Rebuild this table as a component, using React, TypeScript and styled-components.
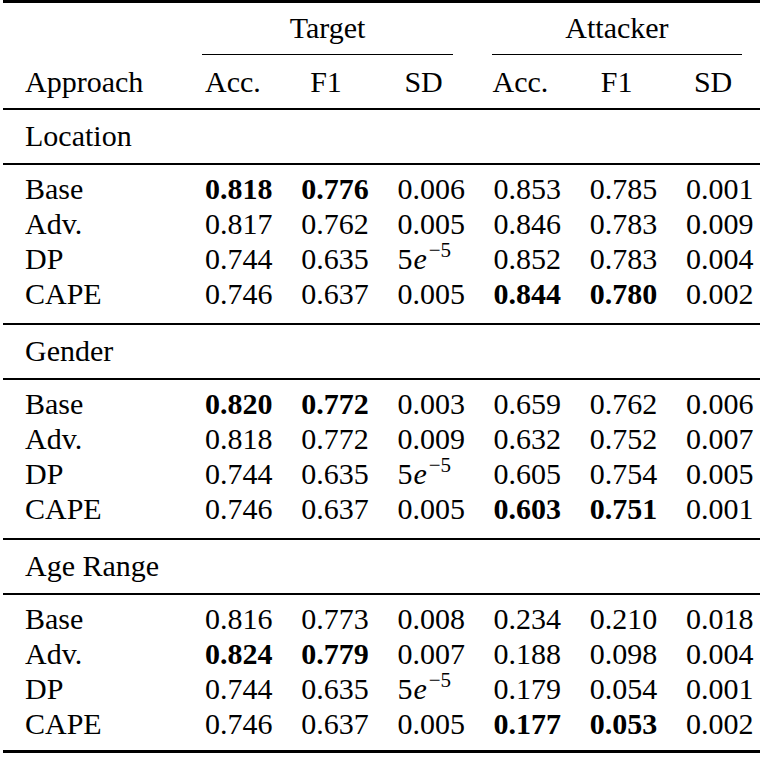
import React from 'react'
import styled, { createGlobalStyle } from 'styled-components'

const COLS = '199px repeat(5, 96.2px) 77px'

const GlobalStyle = createGlobalStyle`
  html, body {
    margin: 0;
    padding: 0;
    background: #fff;
  }
  body {
    font-family: "Liberation Serif", "Times New Roman", serif;
    color: #000;
  }
`

const Table = styled.div`
  width: 757px;
  margin-left: 3px;
  font-size: 30px;
  line-height: 35px;
`

const Rule = styled.div<{ $thick?: boolean }>`
  height: ${(p) => (p.$thick ? '3px' : '2px')};
  background: #000;
`

const Row = styled.div`
  display: grid;
  grid-template-columns: ${COLS};
  height: 35px;
  white-space: nowrap;
`

const GroupRow = styled(Row)`
  padding: 7px 0 0;
  height: auto;
`

const GroupHead = styled.div<{ $span: string; $left: number; $right: number }>`
  grid-column: ${(p) => p.$span};
  margin: 0 ${(p) => p.$right}px 0 ${(p) => p.$left}px;
  padding-bottom: 9px;
  border-bottom: 1px solid #000;
  text-align: center;
`

const HeadRow = styled(Row)`
  height: auto;
  padding: 9px 0 9px;
`

const Label = styled.div`
  padding-left: 22px;
`

const ColHead = styled.div<{ $indent: number }>`
  padding-left: ${(p) => p.$indent}px;
`

const Section = styled.div<{ $last?: boolean }>`
  padding: 6px 0 ${(p) => (p.$last ? 9 : 12)}px;
`

const SectionTitle = styled.div`
  padding: 8px 0 10px 22px;
  height: 35px;
`

const Num = styled.div<{ $bold?: boolean }>`
  padding-left: 3px;
  font-weight: ${(p) => (p.$bold ? 700 : 400)};
`

const MathE = styled.i`
  font-style: italic;
  margin-left: 1px;
`

const Sup = styled.span`
  font-size: 21px;
  line-height: 0;
  vertical-align: 12px;
  margin-left: 2px;
`

type Cell = string

const sections: { title: string; rows: Cell[][] }[] = [
  {
    title: 'Location',
    rows: [
      ['Base', '*0.818', '*0.776', '0.006', '0.853', '0.785', '0.001'],
      ['Adv.', '0.817', '0.762', '0.005', '0.846', '0.783', '0.009'],
      ['DP', '0.744', '0.635', 'exp', '0.852', '0.783', '0.004'],
      ['CAPE', '0.746', '0.637', '0.005', '*0.844', '*0.780', '0.002'],
    ],
  },
  {
    title: 'Gender',
    rows: [
      ['Base', '*0.820', '*0.772', '0.003', '0.659', '0.762', '0.006'],
      ['Adv.', '0.818', '0.772', '0.009', '0.632', '0.752', '0.007'],
      ['DP', '0.744', '0.635', 'exp', '0.605', '0.754', '0.005'],
      ['CAPE', '0.746', '0.637', '0.005', '*0.603', '*0.751', '0.001'],
    ],
  },
  {
    title: 'Age Range',
    rows: [
      ['Base', '0.816', '0.773', '0.008', '0.234', '0.210', '0.018'],
      ['Adv.', '*0.824', '*0.779', '0.007', '0.188', '0.098', '0.004'],
      ['DP', '0.744', '0.635', 'exp', '0.179', '0.054', '0.001'],
      ['CAPE', '0.746', '0.637', '0.005', '*0.177', '*0.053', '0.002'],
    ],
  },
]

const heads: [string, number][] = [
  ['Acc.', 3],
  ['F1', 12],
  ['SD', 10],
  ['Acc.', 2],
  ['F1', 14],
  ['SD', 11],
]

const Value = ({ v }: { v: Cell }) => {
  if (v === 'exp') {
    return (
      <Num>
        5<MathE>e</MathE>
        <Sup>−5</Sup>
      </Num>
    )
  }
  const bold = v.startsWith('*')
  return <Num $bold={bold}>{bold ? v.slice(1) : v}</Num>
}

export default function App() {
  return (
    <>
      <GlobalStyle />
      <Table>
        <Rule $thick />
        <GroupRow>
          <GroupHead $span="2 / 5" $left={0} $right={37.6}>
            Target
          </GroupHead>
          <GroupHead $span="5 / 8" $left={1.4} $right={18}>
            Attacker
          </GroupHead>
        </GroupRow>
        <HeadRow>
          <Label>Approach</Label>
          {heads.map(([h, indent], i) => (
            <ColHead key={i} $indent={indent}>
              {h}
            </ColHead>
          ))}
        </HeadRow>
        {sections.map((s, si) => (
          <React.Fragment key={s.title}>
            <Rule />
            <SectionTitle>{s.title}</SectionTitle>
            <Rule />
            <Section $last={si === sections.length - 1}>
              {s.rows.map((r) => (
                <Row key={r[0]}>
                  <Label>{r[0]}</Label>
                  {r.slice(1).map((v, i) => (
                    <Value key={i} v={v} />
                  ))}
                </Row>
              ))}
            </Section>
          </React.Fragment>
        ))}
        <Rule $thick />
      </Table>
    </>
  )
}
